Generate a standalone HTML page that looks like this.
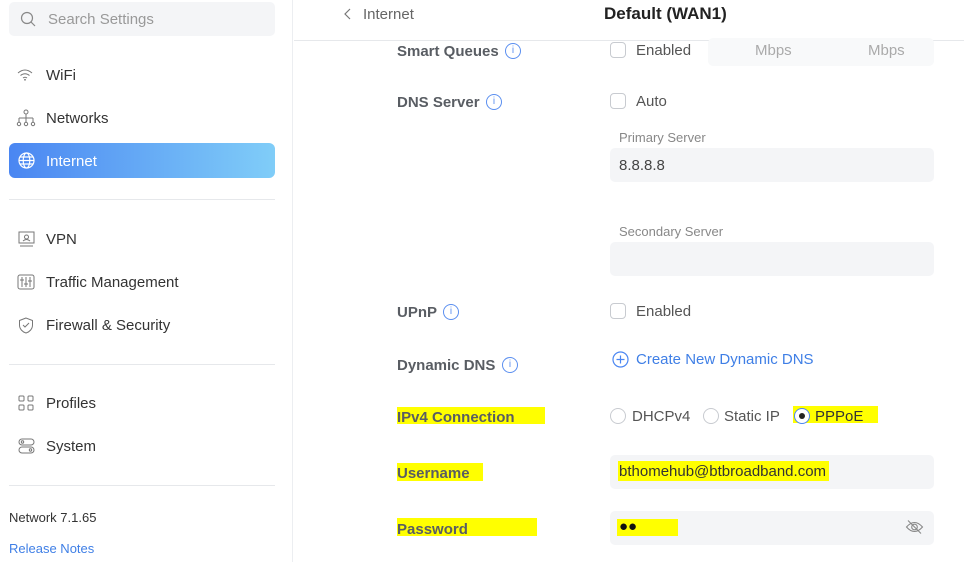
<!DOCTYPE html>
<html><head><meta charset="utf-8"><style>
*{margin:0;padding:0;box-sizing:border-box}
body{width:964px;height:562px;background:#fff;font-family:"Liberation Sans",sans-serif;position:relative;overflow:hidden;color:#333}
.a{position:absolute;white-space:nowrap}
.side{position:absolute;left:0;top:0;width:293px;height:562px;border-right:1px solid #eceef1}
.nav{font-size:15px;color:#333;margin-top:1px}
.hr{position:absolute;left:9px;width:266px;height:1px;background:#e6e8eb}
.lbl{font-size:15px;font-weight:bold;color:#595d63;margin-top:1px}
.inp{position:absolute;background:#f4f5f7;border-radius:5px}
.cb{position:absolute;width:16px;height:16px;border:1px solid #c8cbd0;border-radius:4px;background:#fff}
.rd{position:absolute;width:16px;height:16px;border:1px solid #c8cbd0;border-radius:50%;background:#fff}
.ctl{font-size:15px;color:#555;margin-top:1px}
.hl{position:absolute;background:#ffff00}
.info{position:absolute;width:16px;height:16px;border:1px solid #5b8ff0;border-radius:50%;color:#5b8ff0;font-size:10px;text-align:center;line-height:14px}
</style></head><body>
<div class="side">
 <div class="a" style="left:9px;top:2px;width:266px;height:34px;background:#f4f5f7;border-radius:5px"></div>
 <svg class="a" style="left:20px;top:11px" width="16" height="16" viewBox="0 0 16 16"><circle cx="7" cy="7" r="5.5" fill="none" stroke="#888" stroke-width="1.2"/><path d="M11 11l4 4" stroke="#888" stroke-width="1.2"/></svg>
 <div class="a" style="left:48px;top:11px;font-size:15px;color:#999">Search Settings</div>

 <svg class="a" style="left:17px;top:69px" width="16" height="12" viewBox="0 0 16 12"><path d="M1 4Q8-2 15 4M3.5 6.5Q8 3 12.5 6.5M6 9Q8 7.5 10 9" fill="none" stroke="#777" stroke-width="1"/><circle cx="8" cy="10.8" r="0.9" fill="#777"/></svg>
 <div class="a nav" style="left:46px;top:66px">WiFi</div>
 <svg class="a" style="left:15px;top:109px" width="22" height="18" viewBox="0 0 22 18"><g fill="none" stroke="#777" stroke-width="1"><circle cx="11" cy="3" r="2"/><path d="M11 5v4M4 9h14M4 9v4M11 9v4M18 9v4"/><circle cx="4" cy="15" r="1.7"/><circle cx="11" cy="15" r="1.7"/><circle cx="18" cy="15" r="1.7"/></g></svg>
 <div class="a nav" style="left:46px;top:109px">Networks</div>

 <div class="a" style="left:9px;top:143px;width:266px;height:35px;border-radius:6px;background:linear-gradient(90deg,#4a86f2,#80cdf8)"></div>
 <svg class="a" style="left:18px;top:152px" width="17" height="17" viewBox="0 0 17 17"><g fill="none" stroke="#fff" stroke-width="1.2"><circle cx="8.5" cy="8.5" r="7.5"/><ellipse cx="8.5" cy="8.5" rx="3.3" ry="7.5"/><path d="M1 8.5h15M2 5h13M2 12h13"/></g></svg>
 <div class="a nav" style="left:46px;top:152px;color:#fff">Internet</div>
 <div class="hr" style="top:199px"></div>

 <svg class="a" style="left:18px;top:231px" width="17" height="16" viewBox="0 0 17 16"><g fill="none" stroke="#777" stroke-width="1"><rect x="1" y="1" width="15" height="11"/><circle cx="8.5" cy="6" r="2"/><path d="M5 10q3.5-3 7 0M2 15h13"/></g></svg>
 <div class="a nav" style="left:46px;top:230px">VPN</div>
 <svg class="a" style="left:17px;top:274px" width="18" height="16" viewBox="0 0 18 16"><g fill="none" stroke="#777" stroke-width="1"><rect x="1" y="1" width="16" height="14" rx="2"/><path d="M5 3v10M9 3v10M13 3v10M3 6h4M7 10h4M11 7h4"/></g></svg>
 <div class="a nav" style="left:46px;top:273px">Traffic Management</div>
 <svg class="a" style="left:18px;top:317px" width="16" height="17" viewBox="0 0 16 17"><path d="M8 1L1.5 3.5V8c0 4 3 7 6.5 8 3.5-1 6.5-4 6.5-8V3.5z" fill="none" stroke="#777" stroke-width="1"/><path d="M5 8l2 2 4-4" fill="none" stroke="#777" stroke-width="1"/></svg>
 <div class="a nav" style="left:46px;top:316px">Firewall &amp; Security</div>
 <div class="hr" style="top:364px"></div>

 <svg class="a" style="left:18px;top:395px" width="16" height="16" viewBox="0 0 16 16"><g fill="none" stroke="#777" stroke-width="1"><rect x="1" y="1" width="5" height="5" rx="1"/><rect x="10" y="1" width="5" height="5" rx="1"/><rect x="1" y="10" width="5" height="5" rx="1"/><rect x="10" y="10" width="5" height="5" rx="1"/></g></svg>
 <div class="a nav" style="left:46px;top:394px">Profiles</div>
 <svg class="a" style="left:18px;top:438px" width="17" height="16" viewBox="0 0 17 16"><g fill="none" stroke="#777" stroke-width="1"><rect x="1" y="1" width="15" height="6" rx="3"/><rect x="1" y="9" width="15" height="6" rx="3"/><circle cx="4.5" cy="4" r="1.2"/><circle cx="12.5" cy="12" r="1.2"/></g></svg>
 <div class="a nav" style="left:46px;top:437px">System</div>
 <div class="hr" style="top:485px"></div>
 <div class="a" style="left:9px;top:510px;font-size:13px;color:#333">Network 7.1.65</div>
 <div class="a" style="left:9px;top:541px;font-size:13px;color:#3f7fe6">Release Notes</div>
</div>

<div class="a" style="left:294px;top:40px;width:670px;height:1px;background:#e6e8eb"></div>
<svg class="a" style="left:343px;top:7px" width="10" height="14" viewBox="0 0 10 14"><path d="M7 2L2 7l5 5" fill="none" stroke="#777" stroke-width="1.2"/></svg>
<div class="a" style="left:363px;top:6px;font-size:15px;color:#666">Internet</div>
<div class="a" style="left:604px;top:4px;font-size:17px;font-weight:bold;color:#222">Default (WAN1)</div>

<div class="hl" style="left:397px;top:407px;width:148px;height:17px"></div>
<div class="hl" style="left:397px;top:463px;width:86px;height:18px"></div>
<div class="hl" style="left:397px;top:518px;width:140px;height:18px"></div>
<div class="hl" style="left:793px;top:406px;width:85px;height:17px"></div>
<div class="inp" style="left:610px;top:455px;width:324px;height:34px"></div>
<div class="inp" style="left:610px;top:511px;width:324px;height:34px"></div>
<div class="hl" style="left:618px;top:461px;width:211px;height:20px"></div>
<div class="hl" style="left:617px;top:519px;width:61px;height:17px"></div>

<div class="a lbl" style="left:397px;top:42px">Smart Queues</div><div class="info" style="left:505px;top:43px">i</div>
<div class="a lbl" style="left:397px;top:93px">DNS Server</div><div class="info" style="left:486px;top:94px">i</div>
<div class="a lbl" style="left:397px;top:303px">UPnP</div><div class="info" style="left:443px;top:304px">i</div>
<div class="a lbl" style="left:397px;top:356px">Dynamic DNS</div><div class="info" style="left:502px;top:357px">i</div>
<div class="a lbl" style="left:397px;top:408px">IPv4 Connection</div>
<div class="a lbl" style="left:397px;top:464px">Username</div>
<div class="a lbl" style="left:397px;top:520px">Password</div>

<div class="cb" style="left:610px;top:42px"></div>
<div class="a ctl" style="left:636px;top:41px">Enabled</div>
<div class="inp" style="left:708px;top:38px;width:226px;height:28px;background:#f8f9fa"></div>
<div class="a" style="left:755px;top:42px;font-size:15px;color:#aaa">Mbps</div>
<div class="a" style="left:868px;top:42px;font-size:15px;color:#aaa">Mbps</div>

<div class="cb" style="left:610px;top:93px"></div>
<div class="a ctl" style="left:636px;top:92px">Auto</div>
<div class="a" style="left:619px;top:130px;font-size:13px;color:#888">Primary Server</div>
<div class="inp" style="left:610px;top:148px;width:324px;height:34px"></div>
<div class="a" style="left:619px;top:157px;font-size:15px;color:#444">8.8.8.8</div>
<div class="a" style="left:619px;top:224px;font-size:13px;color:#888">Secondary Server</div>
<div class="inp" style="left:610px;top:242px;width:324px;height:34px"></div>

<div class="cb" style="left:610px;top:303px"></div>
<div class="a ctl" style="left:636px;top:302px">Enabled</div>
<svg class="a" style="left:612px;top:351px" width="17" height="17" viewBox="0 0 17 17"><circle cx="8.5" cy="8.5" r="7.5" fill="none" stroke="#4a86f2" stroke-width="1.2"/><path d="M8.5 4.5v8M4.5 8.5h8" stroke="#4a86f2" stroke-width="1.2"/></svg>
<div class="a" style="left:636px;top:351px;font-size:15px;color:#3f7fe6">Create New Dynamic DNS</div>

<div class="rd" style="left:610px;top:408px"></div>
<div class="a ctl" style="left:632px;top:407px">DHCPv4</div>
<div class="rd" style="left:703px;top:408px"></div>
<div class="a ctl" style="left:724px;top:407px">Static IP</div>
<div class="rd" style="left:794px;top:408px;border-color:#4a86f2"><div style="position:absolute;left:4px;top:4px;width:6px;height:6px;border-radius:50%;background:#222"></div></div>
<div class="a ctl" style="left:815px;top:407px;color:#333">PPPoE</div>

<div class="a" style="left:619px;top:463px;font-size:15px;color:#333">bthomehub@btbroadband.com</div>
<div class="a" style="left:619px;top:518px;font-size:15px;color:#111">●●</div>
<svg class="a" style="left:905px;top:519px" width="19" height="16" viewBox="0 0 19 16"><g fill="none" stroke="#888" stroke-width="1.1"><path d="M1.5 8Q9.5-1 17.5 8Q9.5 17 1.5 8z"/><circle cx="9.5" cy="8" r="2.8"/><path d="M3 1.5l13 13"/></g></svg>
</body></html>
